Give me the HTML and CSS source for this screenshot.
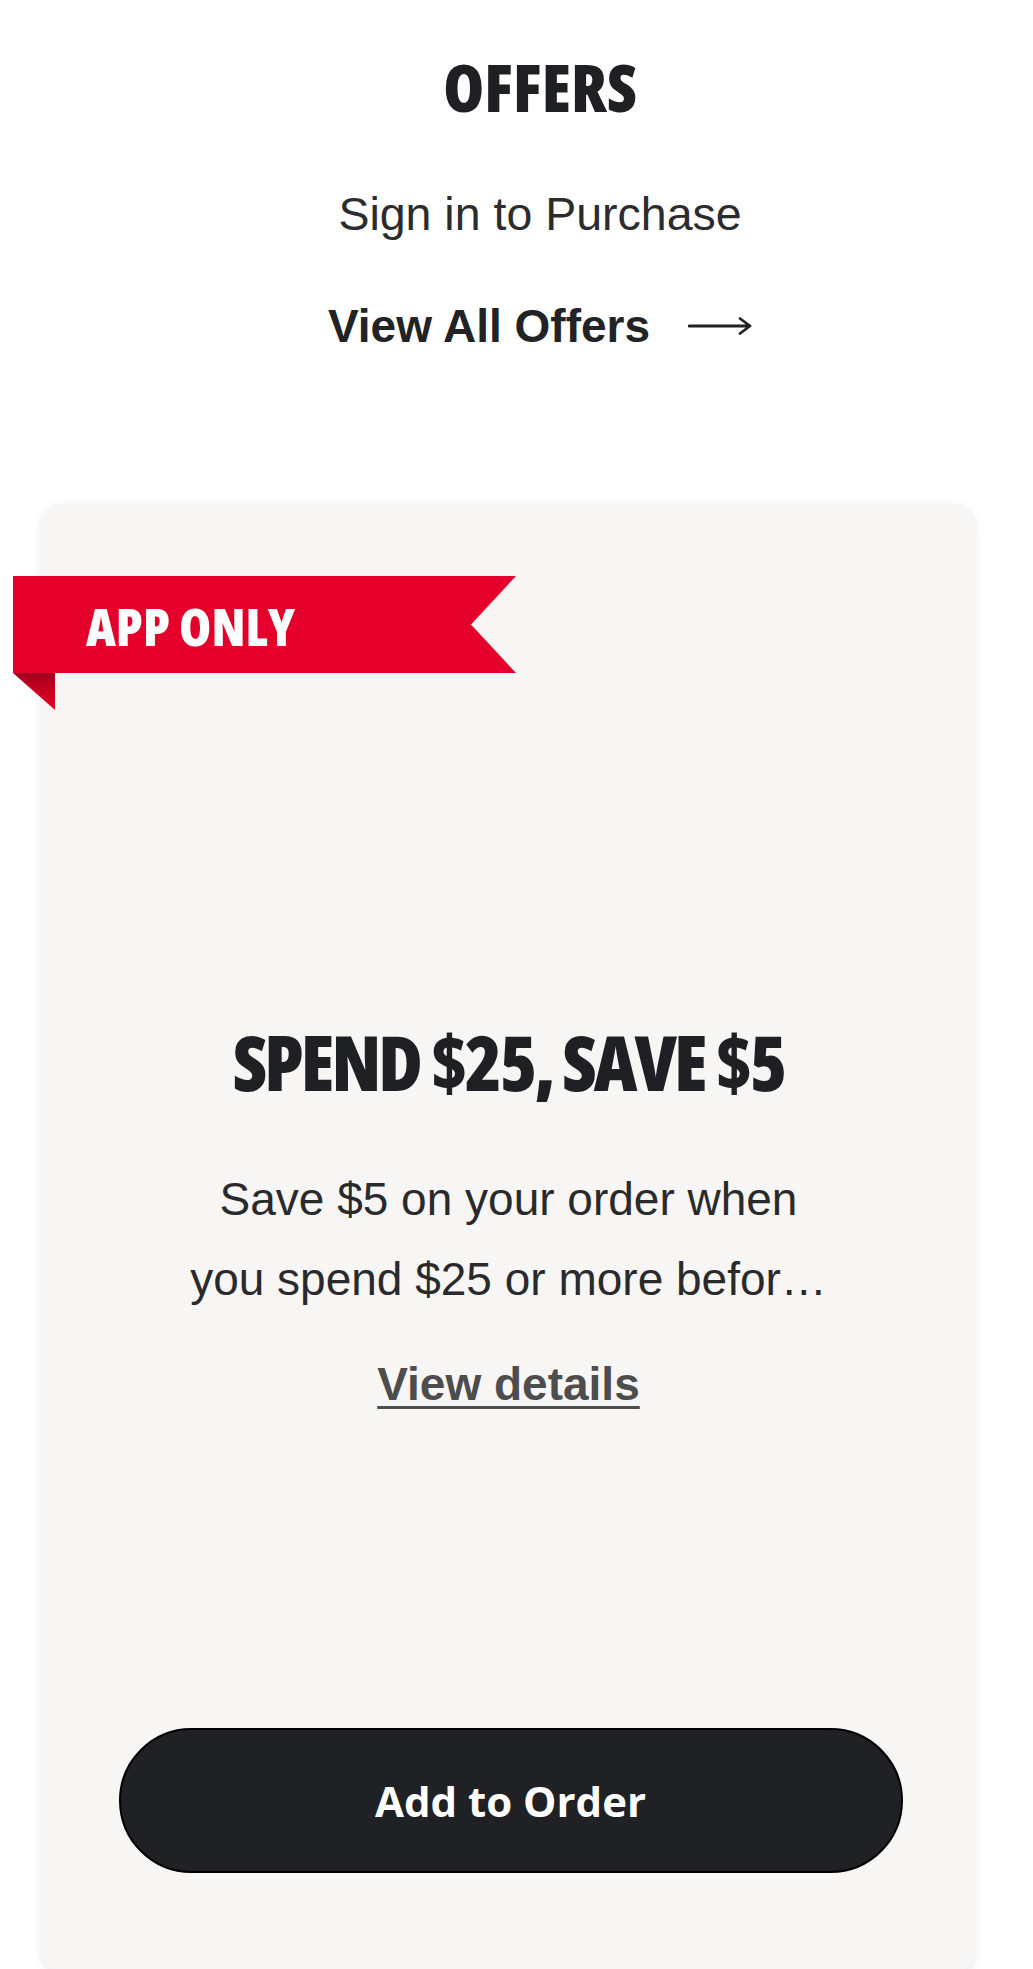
FILE: index.html
```html
<!DOCTYPE html>
<html lang="en">
<head>
<meta charset="utf-8">
<title>Offers</title>
<link rel="stylesheet" href="styles.css">
</head>
<body>
  <header class="top">
    <h1 class="page-title">OFFERS</h1>
    <p class="signin">Sign in to Purchase</p>
    <a class="view-all" href="#">
      <span>View All Offers</span>
      <svg class="arrow" width="64" height="24" viewBox="0 0 64 24" aria-hidden="true">
        <path d="M1 12 H62 M52 4.5 L62 12 L52 19.5" fill="none" stroke="#222" stroke-width="2.8" stroke-linecap="round" stroke-linejoin="round"/>
      </svg>
    </a>
  </header>

  <section class="card">
    <div class="ribbon">
      <div class="ribbon-band">APP ONLY</div>
      <div class="ribbon-fold"></div>
    </div>
    <h2 class="offer-title">SPEND $25, SAVE $5</h2>
    <p class="offer-desc">Save $5 on your order when you spend $25 or more befor…</p>
    <a class="details" href="#">View details</a>
    <button class="add-btn" type="button">Add to Order</button>
  </section>
</body>
</html>
```

FILE: styles.css
```css
html, body {
  margin: 0;
  padding: 0;
  background: #ffffff;
}

body {
  font-family: "Liberation Sans", Arial, sans-serif;
  color: #222326;
  width: 1033px;
  overflow: hidden;
}

.top {
  display: flex;
  flex-direction: column;
  align-items: center;
  padding: 53px 0 0 47px;
}

.page-title {
  margin: 0;
  font-family: "Open Sans", "Liberation Sans", sans-serif;
  font-weight: 800;
  font-stretch: 75%;
  font-size: 66px;
  line-height: 66px;
  color: #1f2023;
}

.signin {
  margin: 67px 0 0;
  font-size: 46.5px;
  line-height: 56px;
  color: #2c2c2e;
}

.view-all {
  margin-top: 56px;
  display: flex;
  align-items: center;
  gap: 38px;
  font-size: 46px;
  line-height: 56px;
  font-weight: 700;
  color: #222326;
  text-decoration: none;
}

.arrow {
  display: block;
}

.card {
  position: relative;
  margin: 150px 0 0 42px;
  width: 933px;
  box-sizing: border-box;
  padding: 520px 0 100px;
  background: #f7f6f4;
  border-radius: 22px;
  box-shadow: 0 2px 10px rgba(0, 0, 0, 0.10);
  display: flex;
  flex-direction: column;
  align-items: center;
}

.ribbon {
  position: absolute;
  left: -29px;
  top: 72px;
  width: 503px;
}

.ribbon-band {
  height: 97px;
  box-sizing: border-box;
  padding: 3px 0 0 73px;
  line-height: 94px;
  background: #e4002b;
  clip-path: polygon(0 0, 100% 0, calc(100% - 45px) 50%, 100% 100%, 0 100%);
  font-family: "Open Sans", "Liberation Sans", sans-serif;
  font-weight: 800;
  font-stretch: 75%;
  font-size: 52px;
  color: #ffffff;
  white-space: nowrap;
}

.ribbon-fold {
  width: 42px;
  height: 37px;
  background: linear-gradient(180deg, #9e001d 0%, #c8001f 45%, #e4002b 100%);
  clip-path: polygon(0 0, 100% 0, 100% 100%);
}

.offer-title {
  margin: 0;
  font-family: "Open Sans", "Liberation Sans", sans-serif;
  font-weight: 800;
  font-stretch: 75%;
  font-size: 76px;
  line-height: 76px;
  letter-spacing: -3px;
  color: #1f2023;
  text-align: center;
}

.offer-desc {
  margin: 59px 0 0;
  max-width: 650px;
  font-size: 46px;
  line-height: 80px;
  color: #2a2a2c;
  text-align: center;
}

.details {
  margin-top: 37px;
  font-size: 46px;
  line-height: 56px;
  font-weight: 700;
  color: #4d4d4d;
  text-decoration: underline;
  text-decoration-thickness: 3px;
  text-underline-offset: 6px;
}

.add-btn {
  margin: 316px 0 0 4px;
  width: 784px;
  height: 145px;
  border: 2px solid #000000;
  border-radius: 73px;
  background: #202124;
  color: #ffffff;
  font-family: "Open Sans", "Liberation Sans", sans-serif;
  font-weight: 700;
  font-size: 42px;
  cursor: pointer;
}
```
